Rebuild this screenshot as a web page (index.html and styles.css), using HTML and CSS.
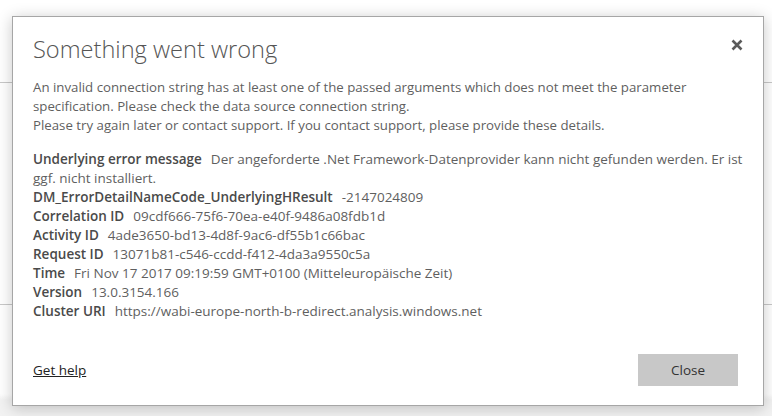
FILE: index.html
```html
<!DOCTYPE html>
<html lang="en">
<head>
<meta charset="utf-8">
<title>Something went wrong</title>
<link rel="stylesheet" href="styles.css">
</head>
<body>
<div class="backdrop">
  <div class="bg-line bg-line-top"></div>
  <div class="bg-line bg-line-bottom"></div>
  <div class="dialog" role="dialog" aria-labelledby="dlg-title">
    <div class="dialog-header">
      <h1 id="dlg-title" class="dialog-title">Something went wrong</h1>
      <button class="dialog-x" aria-label="Close">
        <svg width="12" height="12" viewBox="0 0 12 12"><path d="M1.5 1.5 L10.5 10.5 M10.5 1.5 L1.5 10.5" stroke="#5a5a5a" stroke-width="2.6" fill="none"/></svg>
      </button>
    </div>
    <div class="dialog-message">
      <p>An invalid connection string has at least one of the passed arguments which does not meet the parameter specification. Please check the data source connection string.</p>
      <p>Please try again later or contact support. If you contact support, please provide these details.</p>
    </div>
    <dl class="details">
      <div class="detail"><dt>Underlying error message</dt><dd>Der angeforderte .Net Framework-Datenprovider kann nicht gefunden werden. Er ist ggf. nicht installiert.</dd></div>
      <div class="detail"><dt>DM_ErrorDetailNameCode_UnderlyingHResult</dt><dd>-2147024809</dd></div>
      <div class="detail"><dt>Correlation ID</dt><dd>09cdf666-75f6-70ea-e40f-9486a08fdb1d</dd></div>
      <div class="detail"><dt>Activity ID</dt><dd>4ade3650-bd13-4d8f-9ac6-df55b1c66bac</dd></div>
      <div class="detail"><dt>Request ID</dt><dd>13071b81-c546-ccdd-f412-4da3a9550c5a</dd></div>
      <div class="detail"><dt>Time</dt><dd>Fri Nov 17 2017 09:19:59 GMT+0100 (Mitteleuropäische Zeit)</dd></div>
      <div class="detail"><dt>Version</dt><dd>13.0.3154.166</dd></div>
      <div class="detail"><dt>Cluster URI</dt><dd>https://wabi-europe-north-b-redirect.analysis.windows.net</dd></div>
    </dl>
    <div class="dialog-footer">
      <a class="help-link" href="#">Get help</a>
      <button class="btn-close">Close</button>
    </div>
  </div>
</div>
</body>
</html>
```
FILE: styles.css
```css
* { box-sizing: border-box; }
html, body { margin: 0; padding: 0; }
body {
  width: 772px;
  height: 416px;
  overflow: hidden;
  background: #fff;
  font-family: "Open Sans", "Noto Sans", sans-serif;
}
.backdrop {
  position: relative;
  width: 772px;
  height: 416px;
  padding: 16px 8px 10px 12px;
  background: linear-gradient(#fff 0, #fff 394px, #f2f2f2 400px);
}
.bg-line {
  position: absolute;
  left: 0;
  right: 0;
  height: 1px;
  background: #c8c8c8;
}
.bg-line-top { top: 82px; }
.bg-line-bottom { top: 304px; }
.dialog {
  position: relative;
  width: 752px;
  height: 390px;
  background: #fff;
  border: 1px solid #a6a6a6;
  box-shadow: 0 2px 14px rgba(0,0,0,0.22);
  padding: 0 14px 0 20px;
  display: flex;
  flex-direction: column;
  color: #5f5f5f;
}
.dialog-header {
  display: flex;
  justify-content: space-between;
  align-items: flex-start;
  padding-top: 16px;
  padding-right: 6px;
}
.dialog-title {
  margin: 0;
  font-weight: 300;
  font-size: 23.6px;
  line-height: 32px;
  color: #555;
}
.dialog-x {
  border: 0;
  background: none;
  padding: 0;
  margin: 6px 0 0 0;
  width: 12px;
  height: 12px;
  line-height: 0;
}
.dialog-message {
  margin-top: 13px;
  padding-right: 6px;
  font-size: 13.25px;
  line-height: 19px;
}
.dialog-message p { margin: 0; }
.details {
  width: 712px;
  margin: 15px 0 0 0;
  font-size: 13.5px;
  line-height: 19px;
}
.detail { display: block; }
.detail dt {
  display: inline;
  font-weight: 600;
  color: #4a4a4a;
  margin-right: 9px;
}
.detail dd {
  display: inline;
  margin: 0;
}
.dialog-footer {
  margin-top: auto;
  margin-bottom: 19px;
  padding-right: 6px;
  display: flex;
  justify-content: space-between;
  align-items: center;
}
.help-link {
  color: #222;
  font-size: 13.5px;
  text-decoration: underline;
}
.btn-close {
  width: 100px;
  height: 32px;
  border: 0;
  background: #c8c8c8;
  color: #333;
  font-family: inherit;
  font-size: 13.5px;
  margin-right: 5px;
}
```
